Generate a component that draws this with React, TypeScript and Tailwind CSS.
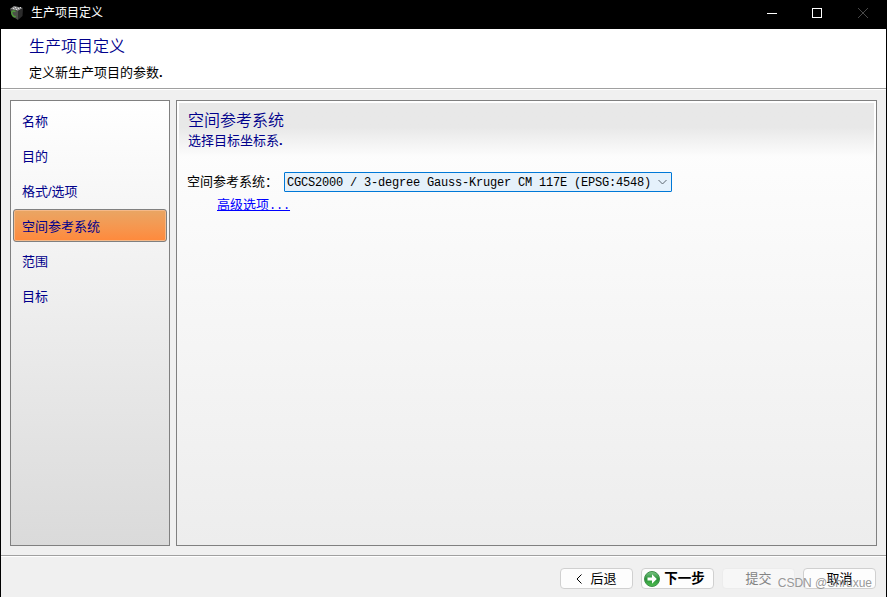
import type { ReactNode } from 'react'

const STEPS = ['名称', '目的', '格式/选项', '空间参考系统', '范围', '目标']
const ACTIVE_STEP = '空间参考系统'

function CubeIcon() {
  return (
    <svg width="16" height="16" viewBox="0 0 16 16" className="block">
      <path d="M1 4 5 1l9 2-5 3z" fill="#8f8f8f" />
      <path d="m1 4 8 2v9l-6-4z" fill="#4c5049" />
      <path d="m9 6 5-3-.5 8L9 15z" fill="#2b2b2b" />
      <path d="M4 3.500h1M6 2.500h1M9 3.500h1M11 2.500h1M7 4.500h1" stroke="#ddd" />
      <path d="M6.500 6.500C3.500 5.500 2 6.500 3 9s2.500 3.500 3.500 2" fill="none" stroke="#4f9a3a" strokeWidth="1.500" />
    </svg>
  )
}

function NextIcon() {
  return (
    <svg width="16" height="16" viewBox="0 0 16 16">
      <defs>
        <linearGradient id="next" x1="0" y1="0" x2="0" y2="1">
          <stop offset="0" stopColor="#7cc886" />
          <stop offset="0.5" stopColor="#2a913a" />
          <stop offset="1" stopColor="#4fc04f" />
        </linearGradient>
      </defs>
      <circle cx="8" cy="8" r="7.500" fill="url(#next)" stroke="#3f8f4b" />
      <path d="M3.500 6.500H8V3.300L12.800 8 8 12.700v-3.200H3.500z" fill="#fff" />
    </svg>
  )
}

function TitleBar() {
  return (
    <div className="flex h-[29px] shrink-0 items-start bg-black pl-2 text-white">
      <div className="pt-[5px]">
        <CubeIcon />
      </div>
      <span className="ml-1.5 flex-1 pt-[5px] text-[12px] leading-4">生产项目定义</span>
      <div className="flex gap-[35px] pt-2 pr-[18px]">
        <svg width="10" height="10" viewBox="0 0 10 10" className="block">
          <path d="M0 5.500h10" stroke="#fff" />
        </svg>
        <svg width="10" height="10" viewBox="0 0 10 10" className="block">
          <rect x="0.500" y="0.500" width="9" height="9" fill="none" stroke="#fff" />
        </svg>
        <svg width="10" height="10" viewBox="0 0 10 10" className="ml-px block">
          <path d="m0 0 10 10M10 0 0 10" stroke="#484848" />
        </svg>
      </div>
    </div>
  )
}

function StepItem({ label, active }: { label: string; active: boolean }) {
  return (
    <li
      className={`flex h-[33px] items-center rounded-[3px] border pt-0.5 pl-2 ${
        active
          ? 'border-[#808080] bg-linear-to-b from-[#e9a664] to-[#ff893b] shadow-[inset_0_0_0_1px_#f5b989]'
          : 'border-transparent'
      }`}
    >
      {label}
    </li>
  )
}

function WizardButton({ children, disabled }: { children: ReactNode; disabled?: boolean }) {
  return (
    <button
      disabled={disabled}
      className={`flex h-[21px] w-[73px] items-center justify-center rounded-[4px] border leading-4 ${
        disabled ? 'border-[#ececec] bg-[#f7f7f7] text-[#838383]' : 'border-[#d0d0d0] bg-[#fdfdfd] text-black'
      }`}
    >
      {children}
    </button>
  )
}

export default function App() {
  return (
    <div className="relative flex h-[597px] w-[887px] flex-col overflow-hidden border-x border-black bg-[#f0f0f0] font-['Liberation_Sans','Noto_Sans_CJK_SC',sans-serif] text-[13px] text-black">
      <TitleBar />
      <header className="h-[60px] shrink-0 border-b border-[#a0a0a0] bg-white pt-[7px] pl-7">
        <h1 className="text-[16px] leading-[22px] font-[350] text-[#00008b]">生产项目定义</h1>
        <p className="mt-[5px] leading-5">
          定义新生产项目的参数<span className="font-bold">.</span>
        </p>
      </header>

      <main className="flex h-[467px] shrink-0 gap-1.5 border-t border-b border-t-white border-b-[#a0a0a0] px-[9px] pt-2.5 pb-[9px]">
        <ul className="flex w-40 shrink-0 flex-col gap-0.5 border border-[#808080] bg-linear-to-b from-white to-[#dadada] px-0.5 pt-[3px] text-[#00008b]">
          {STEPS.map((s) => (
            <StepItem key={s} label={s} active={s === ACTIVE_STEP} />
          ))}
        </ul>

        <section className="w-[701px] shrink-0 border border-[#808080] bg-linear-to-b from-white to-[#ededed] p-0.5">
          <div className="h-[54px] bg-linear-to-b from-[#e8e8e8] from-45% to-[#fdfdfd] pt-[7px] pl-[9px] text-[#00008b]">
            <h2 className="text-[16px] leading-[22px] font-[350]">空间参考系统</h2>
            <p className="leading-[18px]">
              选择目标坐标系<span className="font-bold">.</span>
            </p>
          </div>
          <div className="mt-[15px] flex h-5 items-center pl-2">
            <label className="w-[97px]">空间参考系统：</label>
            <div className="flex h-5 w-[388px] items-center justify-between rounded-[1px] border border-[#0078d7] bg-[#e5f1fb] pr-1 pl-0.5">
              <span className="pt-0.5 font-['Liberation_Mono',monospace] text-[12px] leading-4 tracking-[-0.2px] whitespace-pre">
                CGCS2000 / 3-degree Gauss-Kruger CM 117E (EPSG:4548)
              </span>
              <svg width="9" height="6" viewBox="0 0 9 6">
                <path d="m0.500 1 4 4 4-4" fill="none" stroke="#5c6670" />
              </svg>
            </div>
          </div>
          <a className="mt-1 ml-[38px] block w-[73px] leading-[18px] whitespace-nowrap text-[#0000ff] underline">
            高级选项<span className="font-['Liberation_Mono',monospace] text-[12px] tracking-[-0.2px]">...</span>
          </a>
        </section>
      </main>

      <footer className="flex flex-1 justify-end gap-2 border-t border-white pt-[11px] pr-2.5">
        <WizardButton>
          <svg width="6" height="10" viewBox="0 0 6 10" className="mr-2">
            <path d="M5.500 0.500 1 5l4.500 4.500" fill="none" stroke="#000" />
          </svg>
          后退
        </WizardButton>
        <WizardButton>
          <span className="-ml-1.5 flex items-center gap-1 text-[13.500px] font-bold">
            <NextIcon />
            下一步
          </span>
        </WizardButton>
        <WizardButton disabled>提交</WizardButton>
        <WizardButton>取消</WizardButton>
      </footer>

      <span className="absolute right-[14px] bottom-[6px] text-[12px] leading-4 whitespace-nowrap text-[#8c8c8c]/90">
        CSDN @Shruxue
      </span>
    </div>
  )
}
